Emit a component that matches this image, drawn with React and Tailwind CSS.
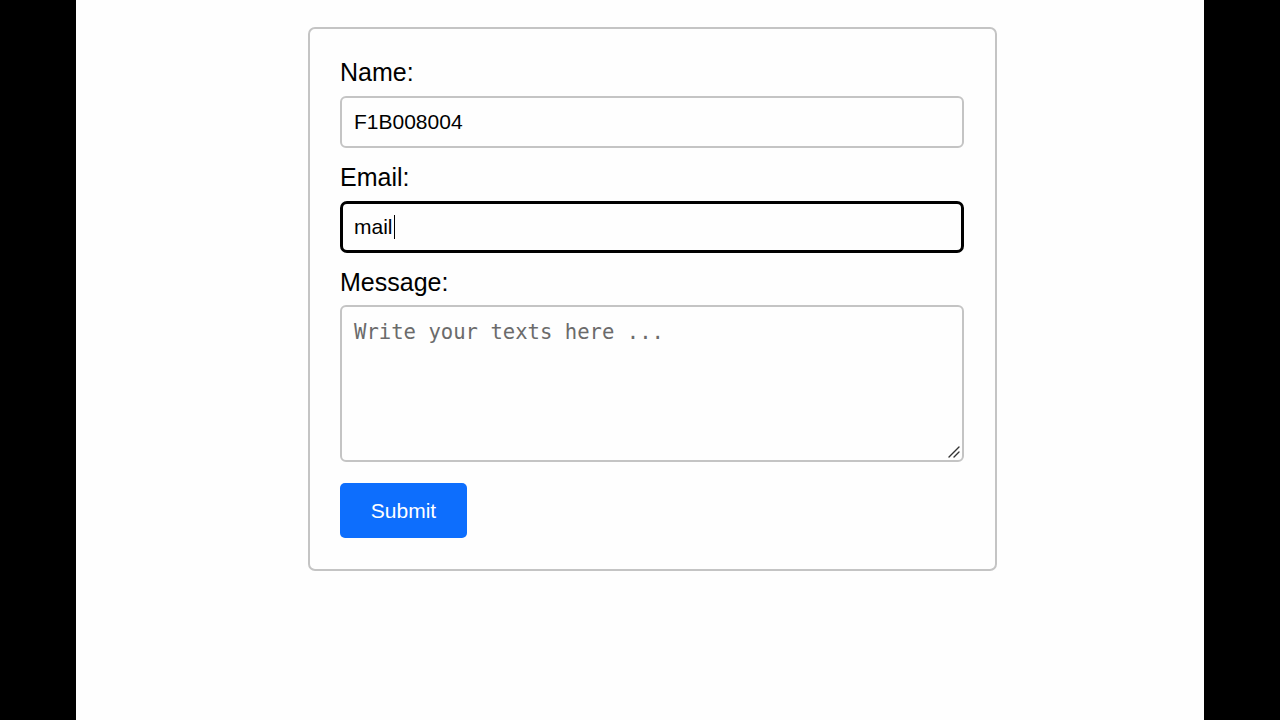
import React from 'react';

export default function App() {
  return (
    <div className="flex h-[720px] w-[1280px] bg-black" style={{ fontFamily: '"Liberation Sans", Arial, sans-serif' }}>
      <div className="ml-[76px] flex h-full w-[1128px] justify-center bg-[#fefefe] pt-[27px]">
        {/* Form card */}
        <form
          onSubmit={(e) => e.preventDefault()}
          className="ml-[25px] flex h-[544px] w-[689px] flex-col rounded-[7px] border-2 border-[#c4c4c4] px-[30px] pt-[30px]"
        >
          <label className="block text-[25px] leading-[27px] text-black">Name:</label>
          <input
            readOnly
            value="F1B008004"
            className="mt-[10px] h-[52px] w-[624px] rounded-[6px] border-2 border-[#c4c4c4] px-[12px] text-[21px] text-black outline-none"
          />

          <label className="mt-[16px] block text-[25px] leading-[27px] text-black">Email:</label>
          <div className="mt-[10px] flex h-[52px] w-[624px] items-center rounded-[7px] border-[3px] border-black px-[11px] text-[21px] text-black">
            <span>mail</span>
            <span className="ml-[1px] h-[24px] w-[1.5px] bg-black" />
          </div>

          <label className="mt-[16px] block text-[25px] leading-[27px] text-black">Message:</label>
          <div className="relative mt-[9px] h-[157px] w-[624px]">
            <textarea
              placeholder="Write your texts here ..."
              className="h-full w-full resize-none rounded-[6px] border-2 border-[#c4c4c4] px-[12px] py-[12px] text-[20.6px] leading-[26px] text-black outline-none placeholder:text-[#6b6b6b]"
              style={{ fontFamily: '"DejaVu Sans Mono", monospace' }}
            />
            {/* resize grip */}
            <svg className="pointer-events-none absolute bottom-[4px] right-[4px]" width="12" height="12" viewBox="0 0 12 12">
              <path d="M1 11 L11 1 M6 11 L11 6" stroke="#333" strokeWidth="1.4" strokeLinecap="round" />
            </svg>
          </div>

          <button
            type="submit"
            className="mt-[21px] h-[55px] w-[127px] rounded-[5px] bg-[#0d6efd] text-[21px] text-white"
          >
            Submit
          </button>
        </form>
      </div>
    </div>
  );
}
